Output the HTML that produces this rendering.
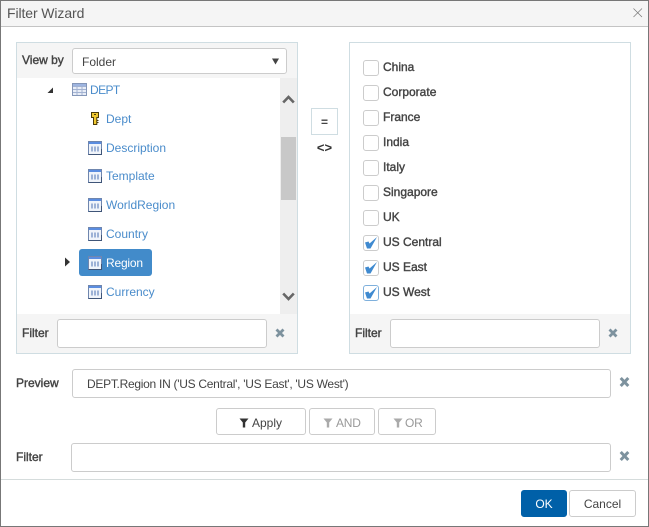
<!DOCTYPE html>
<html><head><meta charset="utf-8">
<style>
html,body{margin:0;padding:0;width:649px;height:527px;overflow:hidden;background:#fff;font-family:"Liberation Sans",sans-serif;font-size:12px;color:#333}
.a{position:absolute;box-sizing:border-box}
.t{position:absolute;white-space:nowrap;line-height:16px;height:16px}
.in{position:absolute;box-sizing:border-box;background:#fff;border:1px solid #ccc;border-radius:3px}
.b{color:#444;-webkit-text-stroke:.4px #444;font-size:12px}
.link{color:#4a8ccb;font-size:12px}
.cb{position:absolute;box-sizing:border-box;left:363px;width:16px;height:16px;background:#fff;border:1px solid #ccc;border-radius:3px}
.lab{position:absolute;left:383px;font-size:12px;color:#444;-webkit-text-stroke:.4px #444;line-height:16px;white-space:nowrap}
.btn{position:absolute;box-sizing:border-box;background:#fff;border:1px solid #ccc;border-radius:3px;text-align:center;line-height:24px}
svg{position:absolute;display:block}
</style></head><body>
<div class="a" style="left:0;top:0;width:649px;height:527px;border:1px solid #777"></div>
<div class="a" style="left:1px;top:1px;width:647px;height:26px;background:#f5f5f5;border-bottom:1px solid #c4c4c4"></div>
<div class="t" style="left:7px;top:5px;font-size:14px;color:#555;letter-spacing:-.1px">Filter Wizard</div>
<svg style="left:632px;top:7px" width="12" height="12" viewBox="0 0 12 12"><path d="M1.500 1.500L10 10M10 1.500L1.500 10" stroke="#777" stroke-width=".7" fill="none"/></svg>

<!-- left panel -->
<div class="a" style="left:16px;top:42px;width:282px;height:312px;border:1px solid #cfdde2;background:#fff"></div>
<div class="a" style="left:17px;top:43px;width:280px;height:35px;background:#f5f5f5"></div>
<div class="t b" style="left:22px;top:52px">View by</div>
<div class="in" style="left:72px;top:48px;width:215px;height:26px"></div>
<div class="t" style="left:82px;top:54px;color:#444">Folder</div>
<svg style="left:271px;top:58px" width="9" height="7" viewBox="0 0 9 7"><path d="M1 .5H8L4.500 6.500Z" fill="#444"/></svg>

<div class="a" style="left:280px;top:78px;width:17px;height:236px;background:#eee"></div>
<div class="a" style="left:281px;top:137px;width:15px;height:63px;background:#c8c8c8"></div>
<svg style="left:282px;top:94px" width="13" height="11" viewBox="0 0 13 11"><path d="M1.200 8.500L6.500 3L11.800 8.500" stroke="#666" stroke-width="2.600" fill="none"/></svg>
<svg style="left:282px;top:291px" width="13" height="11" viewBox="0 0 13 11"><path d="M1.200 2.500L6.500 8L11.800 2.500" stroke="#666" stroke-width="2.600" fill="none"/></svg>

<svg style="left:47px;top:87px" width="7" height="7" viewBox="0 0 7 7"><path d="M6 .5V6H.5Z" fill="#333"/></svg>
<svg style="left:72px;top:83px" width="15" height="13" viewBox="0 0 15 13"><rect x=".5" y=".5" width="14" height="12" fill="#e8edf7" stroke="#8496b8"/><path d="M1 3.500H14M1 6.500H14M1 9.500H14M5 3.500V12M10 3.500V12" stroke="#a3b3d2" stroke-width="1"/><rect x="1" y="1" width="13" height="2" fill="#9db4e0"/></svg>
<div class="t link" style="left:90px;top:82px;letter-spacing:-.6px">DEPT</div>

<svg style="left:90px;top:112px" width="10" height="14" viewBox="0 0 10 14"><path d="M1.500 .5H8.500V5.500H6.800V12.500H3.500V5.500H1.500Z" fill="#f0c830" stroke="#4a3a08" stroke-width="1"/><path d="M4 2.500H6" stroke="#4a3a08"/><path d="M6.500 8.500H8.500M6.500 10.500H8.500" stroke="#4a3a08"/></svg>
<div class="t link" style="left:106px;top:111px">Dept</div>

<svg style="left:88px;top:141px" width="14" height="14" viewBox="0 0 14 14"><rect x=".5" y=".5" width="13" height="13" fill="#f0f4fa" stroke="#6f86ae"/><path d="M.5 13.500H13.500V8" stroke="#3f5578" fill="none"/><rect x="1" y="1" width="12" height="2" fill="#5b8de0"/><rect x="3" y="5.500" width="8" height="5" fill="#9db2d6"/><path d="M5.500 5.500V10.500M8.500 5.500V10.500" stroke="#f0f4fa"/></svg>
<div class="t link" style="left:106px;top:140px">Description</div>
<svg style="left:88px;top:169px" width="14" height="14" viewBox="0 0 14 14"><rect x=".5" y=".5" width="13" height="13" fill="#f0f4fa" stroke="#6f86ae"/><path d="M.5 13.500H13.500V8" stroke="#3f5578" fill="none"/><rect x="1" y="1" width="12" height="2" fill="#5b8de0"/><rect x="3" y="5.500" width="8" height="5" fill="#9db2d6"/><path d="M5.500 5.500V10.500M8.500 5.500V10.500" stroke="#f0f4fa"/></svg>
<div class="t link" style="left:106px;top:168px">Template</div>
<svg style="left:88px;top:198px" width="14" height="14" viewBox="0 0 14 14"><rect x=".5" y=".5" width="13" height="13" fill="#f0f4fa" stroke="#6f86ae"/><path d="M.5 13.500H13.500V8" stroke="#3f5578" fill="none"/><rect x="1" y="1" width="12" height="2" fill="#5b8de0"/><rect x="3" y="5.500" width="8" height="5" fill="#9db2d6"/><path d="M5.500 5.500V10.500M8.500 5.500V10.500" stroke="#f0f4fa"/></svg>
<div class="t link" style="left:106px;top:197px">WorldRegion</div>
<svg style="left:88px;top:227px" width="14" height="14" viewBox="0 0 14 14"><rect x=".5" y=".5" width="13" height="13" fill="#f0f4fa" stroke="#6f86ae"/><path d="M.5 13.500H13.500V8" stroke="#3f5578" fill="none"/><rect x="1" y="1" width="12" height="2" fill="#5b8de0"/><rect x="3" y="5.500" width="8" height="5" fill="#9db2d6"/><path d="M5.500 5.500V10.500M8.500 5.500V10.500" stroke="#f0f4fa"/></svg>
<div class="t link" style="left:106px;top:226px">Country</div>

<svg style="left:64px;top:257px" width="7" height="10" viewBox="0 0 7 10"><path d="M1 .5L6 5L1 9.500Z" fill="#333"/></svg>
<div class="a" style="left:79px;top:249px;width:73px;height:27px;background:#428bca;border-radius:3px"></div>
<svg style="left:88px;top:256px" width="14" height="14" viewBox="0 0 14 14"><rect x=".5" y=".5" width="13" height="13" fill="#f0f4fa" stroke="#6f86ae"/><path d="M.5 13.500H13.500V8" stroke="#3f5578" fill="none"/><rect x="1" y="1" width="12" height="2" fill="#5b8de0"/><rect x="3" y="5.500" width="8" height="5" fill="#9db2d6"/><path d="M5.500 5.500V10.500M8.500 5.500V10.500" stroke="#f0f4fa"/></svg>
<div class="t" style="left:106px;top:255px;color:#fff;letter-spacing:-.2px">Region</div>
<svg style="left:88px;top:285px" width="14" height="14" viewBox="0 0 14 14"><rect x=".5" y=".5" width="13" height="13" fill="#f0f4fa" stroke="#6f86ae"/><path d="M.5 13.500H13.500V8" stroke="#3f5578" fill="none"/><rect x="1" y="1" width="12" height="2" fill="#5b8de0"/><rect x="3" y="5.500" width="8" height="5" fill="#9db2d6"/><path d="M5.500 5.500V10.500M8.500 5.500V10.500" stroke="#f0f4fa"/></svg>
<div class="t link" style="left:106px;top:284px">Currency</div>

<div class="a" style="left:17px;top:314px;width:280px;height:39px;background:#f5f5f5"></div>
<div class="t b" style="left:22px;top:325px">Filter</div>
<div class="in" style="left:57px;top:319px;width:210px;height:29px"></div>
<svg style="left:275px;top:328px" width="10" height="10" viewBox="0 0 10 10"><path d="M1.500 1.500L8.500 8.500M8.500 1.500L1.500 8.500" stroke="#7d929e" stroke-width="2.800"/></svg>

<!-- operators -->
<div class="a" style="left:311px;top:108px;width:27px;height:27px;background:#fff;border:1px solid #cfdde2"></div>
<div class="t" style="left:311px;top:114px;width:27px;text-align:center;font-weight:bold;color:#444">=</div>
<div class="t" style="left:311px;top:140px;width:27px;text-align:center;font-weight:bold;color:#333;font-size:13px">&lt;&gt;</div>

<!-- right panel -->
<div class="a" style="left:349px;top:42px;width:282px;height:312px;border:1px solid #cfdde2;background:#fff"></div>
<div class="cb" style="top:60px"></div><div class="lab" style="top:59px">China</div>
<div class="cb" style="top:85px"></div><div class="lab" style="top:84px">Corporate</div>
<div class="cb" style="top:110px"></div><div class="lab" style="top:109px">France</div>
<div class="cb" style="top:135px"></div><div class="lab" style="top:134px">India</div>
<div class="cb" style="top:160px"></div><div class="lab" style="top:159px">Italy</div>
<div class="cb" style="top:185px"></div><div class="lab" style="top:184px">Singapore</div>
<div class="cb" style="top:210px"></div><div class="lab" style="top:209px">UK</div>
<div class="cb" style="top:235px"></div><div class="lab" style="top:234px">US Central</div>
<div class="cb" style="top:260px"></div><div class="lab" style="top:259px">US East</div>
<div class="cb" style="top:285px;border-color:#7fb0dc"></div><div class="lab" style="top:284px">US West</div>
<svg style="left:364px;top:237px" width="14" height="13" viewBox="0 0 14 13"><path d="M1 5.500L4.500 4.500L5.500 6.500L13 0L6.500 11.500H3Z" fill="#3f8ad0"/></svg>
<svg style="left:364px;top:262px" width="14" height="13" viewBox="0 0 14 13"><path d="M1 5.500L4.500 4.500L5.500 6.500L13 0L6.500 11.500H3Z" fill="#3f8ad0"/></svg>
<svg style="left:364px;top:287px" width="14" height="13" viewBox="0 0 14 13"><path d="M1 5.500L4.500 4.500L5.500 6.500L13 0L6.500 11.500H3Z" fill="#3f8ad0"/></svg>

<div class="a" style="left:350px;top:314px;width:280px;height:39px;background:#f5f5f5"></div>
<div class="t b" style="left:355px;top:325px">Filter</div>
<div class="in" style="left:390px;top:319px;width:210px;height:29px"></div>
<svg style="left:608px;top:328px" width="10" height="10" viewBox="0 0 10 10"><path d="M1.500 1.500L8.500 8.500M8.500 1.500L1.500 8.500" stroke="#7d929e" stroke-width="2.800"/></svg>

<!-- preview -->
<div class="t b" style="left:16px;top:375px">Preview</div>
<div class="in" style="left:72px;top:369px;width:539px;height:29px"></div>
<div class="t" style="left:87px;top:376px;color:#444;letter-spacing:-.28px">DEPT.Region IN ('US Central', 'US East', 'US West')</div>
<svg style="left:619px;top:376px" width="11" height="12" viewBox="0 0 11 12"><path d="M1.700 2L9.300 10M9.300 2L1.700 10" stroke="#7d929e" stroke-width="3"/></svg>

<!-- buttons -->
<div class="btn" style="left:216px;top:408px;width:90px;height:27px"></div>
<svg style="left:239px;top:418px" width="10" height="10" viewBox="0 0 10 10"><path d="M.5 .5H9.500L6.200 4.500V9.500H3.800V4.500Z" fill="#333"/></svg>
<div class="t" style="left:252px;top:415px;color:#444">Apply</div>
<div class="btn" style="left:309px;top:408px;width:66px;height:27px"></div>
<svg style="left:323px;top:418px" width="10" height="10" viewBox="0 0 10 10"><path d="M.5 .5H9.500L6.200 4.500V9.500H3.800V4.500Z" fill="#aaa"/></svg>
<div class="t" style="left:336px;top:415px;color:#999;letter-spacing:-.2px">AND</div>
<div class="btn" style="left:378px;top:408px;width:58px;height:27px"></div>
<svg style="left:393px;top:418px" width="10" height="10" viewBox="0 0 10 10"><path d="M.5 .5H9.500L6.200 4.500V9.500H3.800V4.500Z" fill="#aaa"/></svg>
<div class="t" style="left:405px;top:415px;color:#999;letter-spacing:-.2px">OR</div>

<!-- filter -->
<div class="t b" style="left:16px;top:449px">Filter</div>
<div class="in" style="left:71px;top:443px;width:540px;height:29px"></div>
<svg style="left:619px;top:450px" width="11" height="12" viewBox="0 0 11 12"><path d="M1.700 2L9.300 10M9.300 2L1.700 10" stroke="#7d929e" stroke-width="3"/></svg>

<div class="a" style="left:1px;top:479px;width:647px;height:1px;background:#d5dcdc"></div>
<div class="btn" style="left:521px;top:490px;width:46px;height:27px;background:#0060a8;border-color:#0060a8;color:#fff;line-height:27px">OK</div>
<div class="btn" style="left:569px;top:490px;width:67px;height:27px;color:#444;line-height:27px">Cancel</div>
</body></html>
